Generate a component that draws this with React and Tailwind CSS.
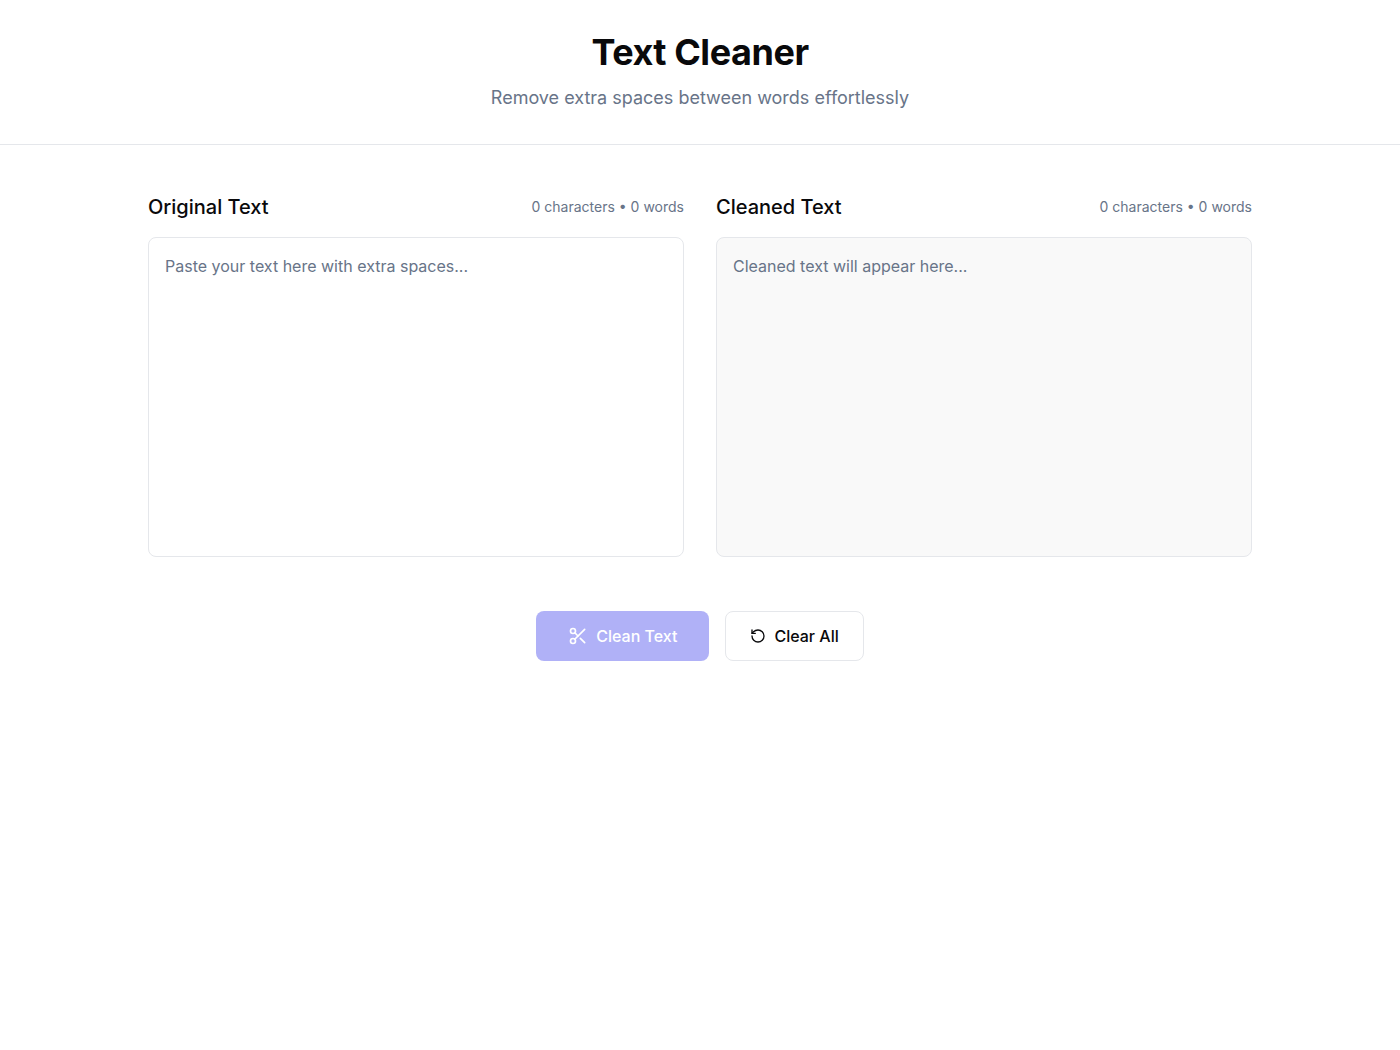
import React, { useState } from 'react';
import { Scissors, RotateCcw } from 'lucide-react';

const countWords = (text) => (text.trim() ? text.trim().split(/\s+/).length : 0);

const Stats = ({ text }) => (
  <span className="text-sm text-[#687488]">
    {text.length} characters • {countWords(text)} words
  </span>
);

export default function App() {
  const [input, setInput] = useState('');
  const [output, setOutput] = useState('');

  const handleClean = () => setOutput(input.replace(/ +/g, ' ').trim());
  const handleClear = () => {
    setInput('');
    setOutput('');
  };

  return (
    <div className="min-h-screen bg-white text-[#09090b] font-['Inter',sans-serif] antialiased">
      {/* Header */}
      <header className="border-b border-[#e5e7eb] py-8 text-center">
        <h1 className="text-4xl font-bold mb-3 leading-10 tracking-[-0.45px]">Text Cleaner</h1>
        <p className="text-lg text-[#687488] leading-7">Remove extra spaces between words effortlessly</p>
      </header>

      <main className="max-w-[1168px] mx-auto px-8 py-12">
        <div className="grid grid-cols-2 gap-8 mb-8">
          <div>
            <div className="flex items-center justify-between mb-4">
              <h2 className="text-xl font-medium leading-7">Original Text</h2>
              <Stats text={input} />
            </div>
            <textarea
              value={input}
              onChange={(e) => setInput(e.target.value)}
              placeholder="Paste your text here with extra spaces..."
              className="block w-full h-80 p-4 text-base rounded-lg border border-[#e5e7eb] bg-white resize-none outline-none placeholder:text-[#687488]"
            />
          </div>
          <div>
            <div className="flex items-center justify-between mb-4">
              <h2 className="text-xl font-medium leading-7">Cleaned Text</h2>
              <Stats text={output} />
            </div>
            <textarea
              readOnly
              value={output}
              placeholder="Cleaned text will appear here..."
              className="block w-full h-80 p-4 text-base rounded-lg border border-[#e5e7eb] bg-[#f9f9f9] resize-none outline-none placeholder:text-[#687488]"
            />
          </div>
        </div>

        <div className="flex justify-center gap-4 pt-[22px]">
          <button
            disabled={!input}
            onClick={handleClean}
            className="flex items-center gap-2 h-[50px] px-8 rounded-lg bg-[#6366f1] text-white font-medium disabled:opacity-50"
          >
            <Scissors className="w-5 h-5" />
            Clean Text
          </button>
          <button
            onClick={handleClear}
            className="flex items-center gap-2 h-[50px] px-6 rounded-lg border border-[#e5e7eb] bg-white font-medium"
          >
            <RotateCcw className="w-4 h-4" />
            Clear All
          </button>
        </div>
      </main>
    </div>
  );
}
